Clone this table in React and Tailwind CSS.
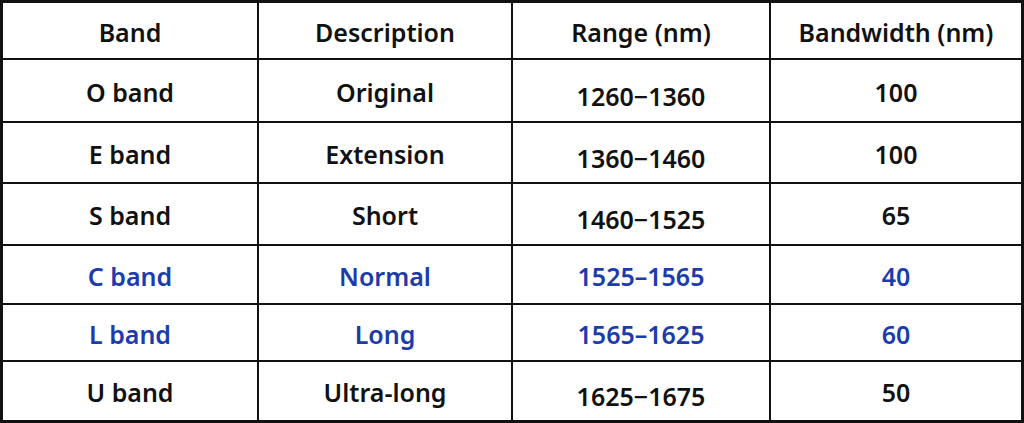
import React from 'react'

const rows = [
  { band: 'O band', desc: 'Original', range: '1260−1360', bw: '100', h: 'h-[63px]' },
  { band: 'E band', desc: 'Extension', range: '1360−1460', bw: '100', h: 'h-[61px]' },
  { band: 'S band', desc: 'Short', range: '1460−1525', bw: '65', h: 'h-[62px]' },
  { band: 'C band', desc: 'Normal', range: '1525–1565', bw: '40', h: 'h-[59px]', blue: true },
  { band: 'L band', desc: 'Long', range: '1565–1625', bw: '60', h: 'h-[57px]', blue: true },
  { band: 'U band', desc: 'Ultra-long', range: '1625−1675', bw: '50', h: 'h-[60px]' },
]

const cols = 'grid grid-cols-[256px_254px_258px_1fr]'

function Cell({ children, last, className = 'pt-1' }) {
  return (
    <div className={`flex items-center justify-center ${last ? '' : 'border-r-2 border-[#111]'} ${className}`}>
      {children}
    </div>
  )
}

export default function App() {
  return (
    <div className="w-[1024px] h-[423px] bg-white font-['Noto_Sans','Open_Sans',sans-serif] text-[25px] font-semibold text-[#111]">
      <div className="h-full border-[3px] border-[#111] flex flex-col">
        {/* Header */}
        <div className={`${cols} h-[57px] border-b-2 border-[#111]`}>
          <Cell>Band</Cell>
          <Cell>Description</Cell>
          <Cell>Range (nm)</Cell>
          <Cell last>Bandwidth (nm)</Cell>
        </div>

        {rows.map((r, i) => (
          <div
            key={r.band}
            className={`${cols} ${r.h} ${i < rows.length - 1 ? 'border-b-2 border-[#111]' : 'flex-1'} ${r.blue ? 'text-[#1b3caa]' : ''}`}
          >
            <Cell>{r.band}</Cell>
            <Cell>{r.desc}</Cell>
            <Cell className={r.blue ? 'pt-1' : 'pt-3'}>{r.range}</Cell>
            <Cell last>{r.bw}</Cell>
          </div>
        ))}
      </div>
    </div>
  )
}
